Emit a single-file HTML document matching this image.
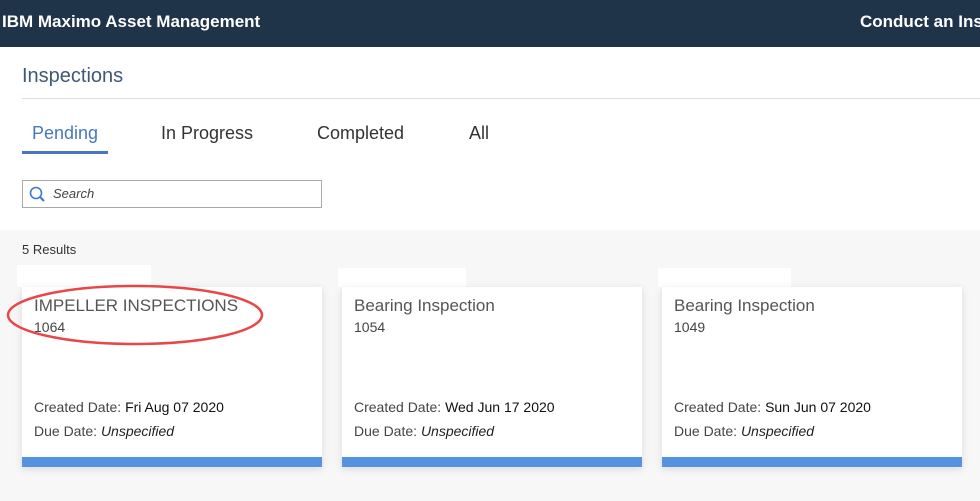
<!DOCTYPE html>
<html><head><style>
*{margin:0;padding:0;box-sizing:border-box}
body{width:980px;height:501px;overflow:hidden;background:#fff;font-family:"Liberation Sans",sans-serif;position:relative}
.hdr{position:absolute;left:0;top:0;width:980px;height:47px;background:#1f3349;color:#fff;font-weight:bold;font-size:17px;overflow:hidden}
.hdr span{position:absolute;top:12px;white-space:nowrap}
.title{position:absolute;left:22px;top:65px;font-size:20px;color:#3f5a75}
.line{position:absolute;left:22px;right:0;top:98px;height:1px;background:#ddd}
.tab{position:absolute;top:123px;font-size:18px;color:#333}
.ul{position:absolute;left:22px;top:151px;width:86px;height:3px;background:#4778bf}
.search{position:absolute;left:22px;top:180px;width:300px;height:28px;border:1px solid #aaa}
.search i{position:absolute;left:30px;top:5px;font-size:13px;color:#444}
.gray{position:absolute;left:0;top:230px;width:980px;height:271px;background:#f7f7f7}
.res{position:absolute;left:22px;top:242px;font-size:13px;color:#333}
.ctab{position:absolute;background:#fff;height:20px}
.card{position:absolute;top:287px;width:300px;height:180px;background:#fff;box-shadow:0 2px 8px rgba(0,0,0,.12)}
.card .bar{position:absolute;left:0;bottom:0;width:100%;height:10px;background:#5593e0}
.card .t{position:absolute;left:12px;top:9px;font-size:17px;color:#555}
.card .n{position:absolute;left:12px;top:32px;font-size:14px;color:#444}
.card .c{position:absolute;left:12px;top:112px;font-size:14px;color:#444}
.card .d{position:absolute;left:12px;top:136px;font-size:14px;color:#444}
.card b{font-weight:normal;color:#111}
</style></head><body>
<div class="hdr"><span style="left:2px">IBM Maximo Asset Management</span><span style="left:860px">Conduct an Ins</span></div>
<div class="title">Inspections</div>
<div class="line"></div>
<div class="tab" style="left:32px;color:#4778bf">Pending</div>
<div class="tab" style="left:161px">In Progress</div>
<div class="tab" style="left:317px">Completed</div>
<div class="tab" style="left:469px">All</div>
<div class="ul"></div>
<div class="search"><svg style="position:absolute;left:6px;top:5px" width="18" height="18" viewBox="0 0 18 18"><circle cx="7" cy="7" r="5.5" fill="none" stroke="#3c7bd0" stroke-width="1.6"/><path d="M11 11l4 4" stroke="#3c7bd0" stroke-width="2.2"/></svg><i>Search</i></div>
<div class="gray"></div>
<div class="res">5 Results</div>
<div class="ctab" style="left:17px;top:265px;width:134px;height:22px"></div>
<div class="ctab" style="left:338px;top:268px;width:128px;height:19px"></div>
<div class="ctab" style="left:658px;top:268px;width:133px;height:19px"></div>
<div class="card" style="left:22px"><div class="t">IMPELLER INSPECTIONS</div><div class="n">1064</div><div class="c">Created Date: <b>Fri Aug 07 2020</b></div><div class="d">Due Date: <i style="color:#222">Unspecified</i></div><div class="bar"></div></div>
<div class="card" style="left:342px"><div class="t">Bearing Inspection</div><div class="n">1054</div><div class="c">Created Date: <b>Wed Jun 17 2020</b></div><div class="d">Due Date: <i style="color:#222">Unspecified</i></div><div class="bar"></div></div>
<div class="card" style="left:662px"><div class="t">Bearing Inspection</div><div class="n">1049</div><div class="c">Created Date: <b>Sun Jun 07 2020</b></div><div class="d">Due Date: <i style="color:#222">Unspecified</i></div><div class="bar"></div></div>
<svg style="position:absolute;left:0;top:280px" width="280" height="80"><ellipse cx="135" cy="35" rx="127" ry="29" fill="none" stroke="#e8474a" stroke-width="2.5"/></svg>
</body></html>
